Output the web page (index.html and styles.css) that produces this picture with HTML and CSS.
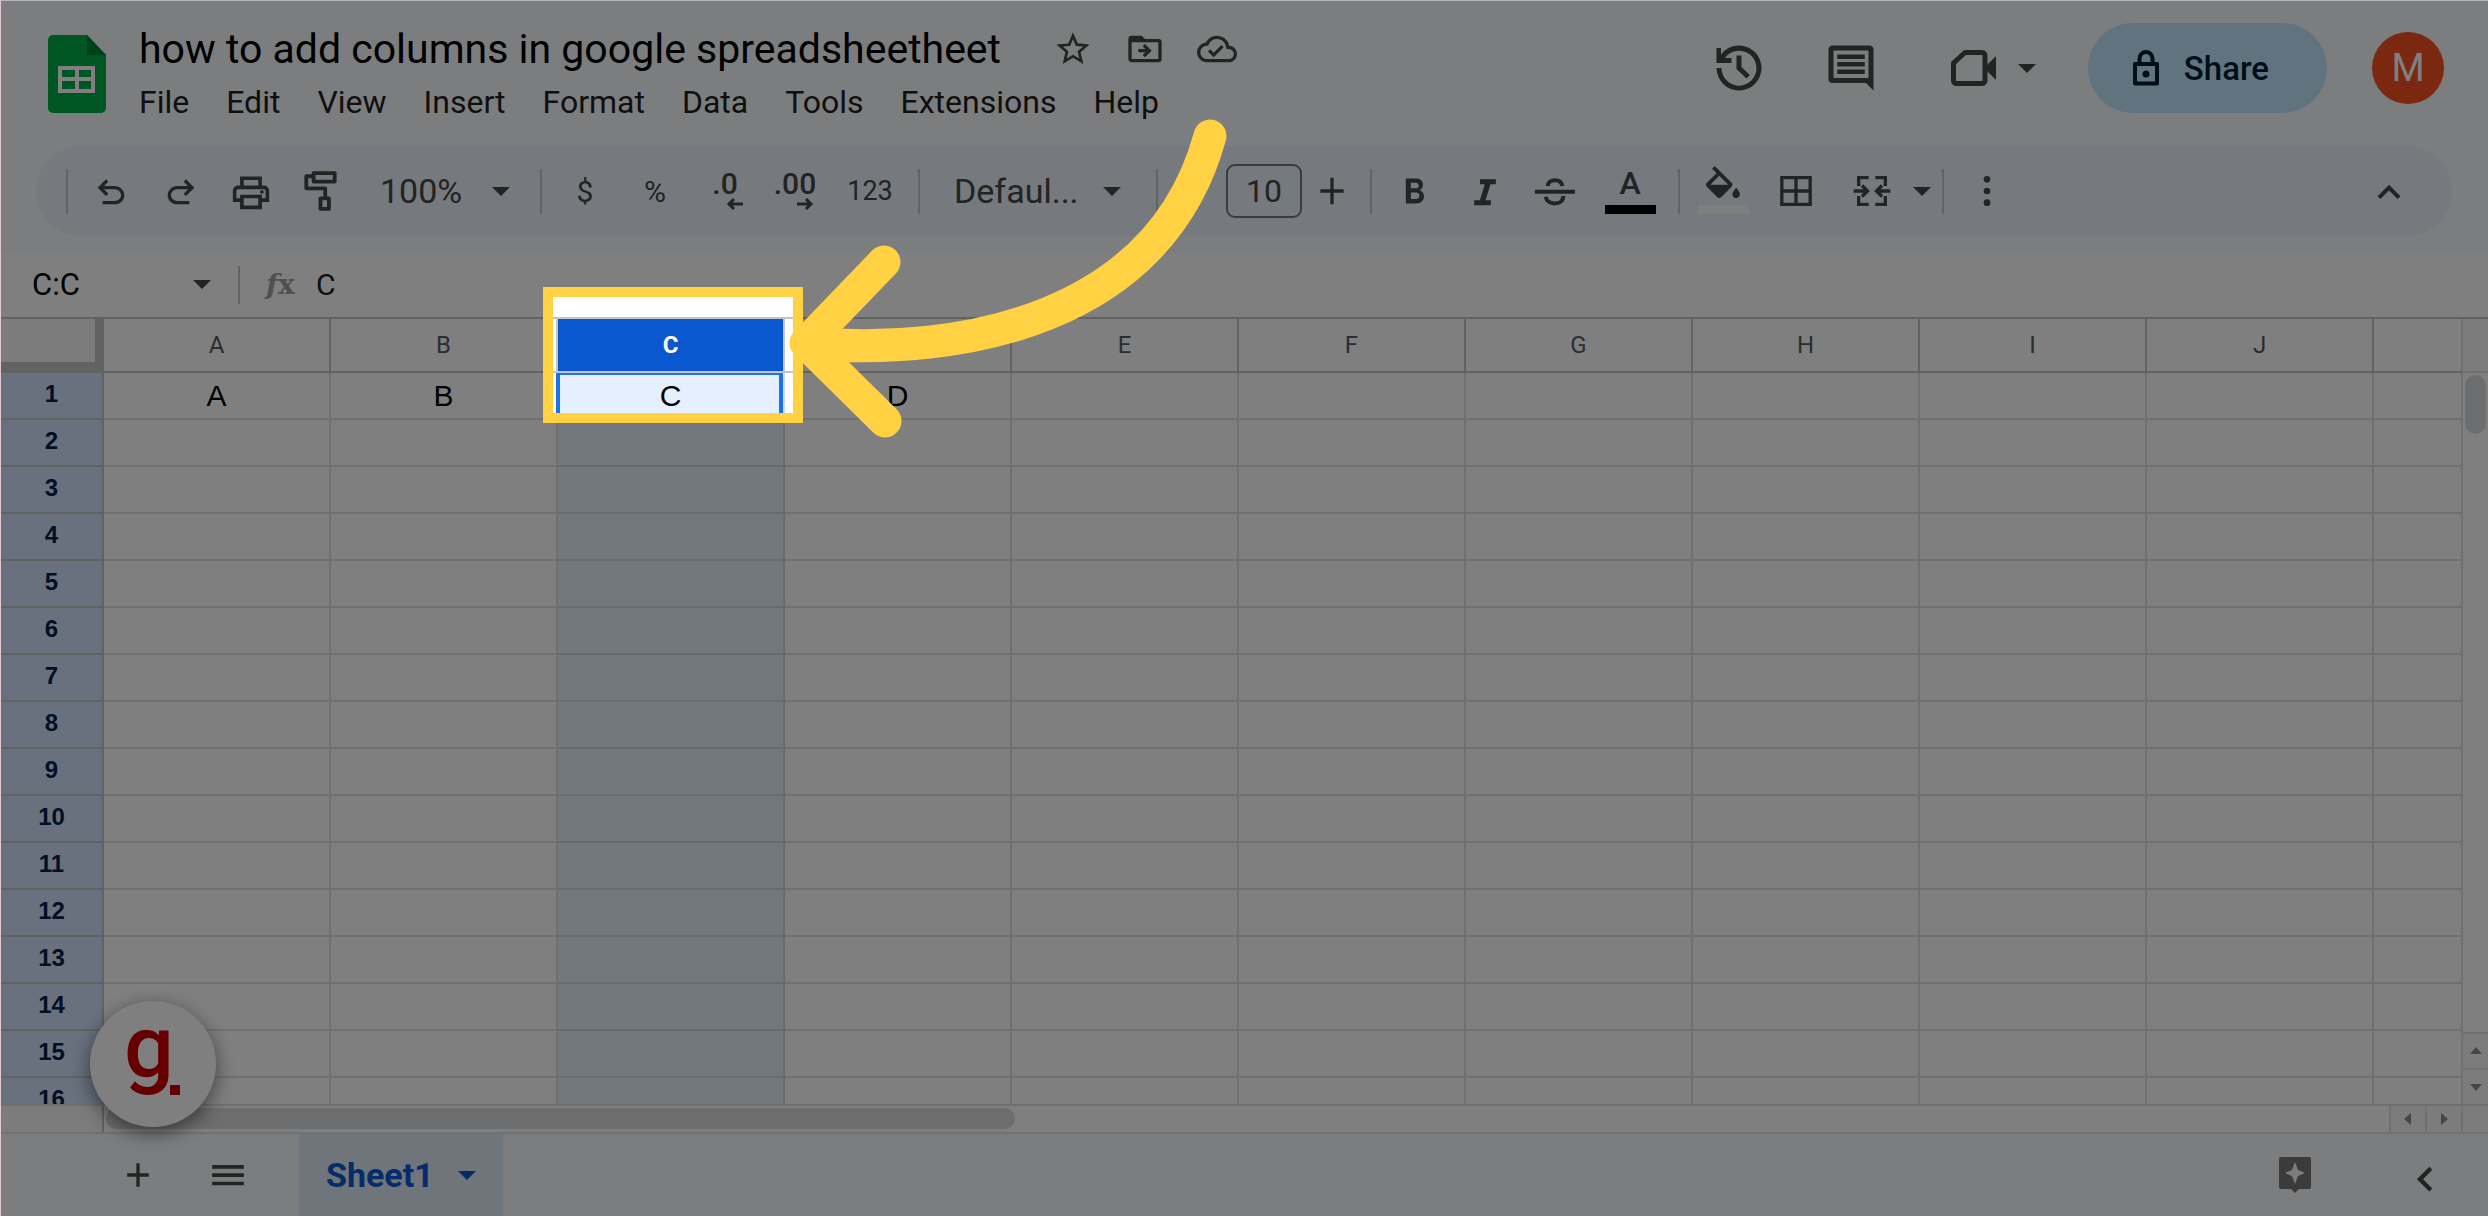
FILE: index.html
```html
<!DOCTYPE html>
<html lang="en">
<head>
<meta charset="utf-8">
<meta name="viewport" content="width=device-width, initial-scale=1">
<title>how to add columns in google spreadsheetheet</title>
<link rel="stylesheet" href="styles.css">
</head>
<body>

<div class="app">

<header class="header">
  <svg class="logo" viewBox="0 0 58 78">
    <path fill="#00ac47" d="M5 0h34l19 20v53a5 5 0 0 1-5 5H5a5 5 0 0 1-5-5V5a5 5 0 0 1 5-5z"/>
    <path fill="#00832d" d="M39 0l19 20H39z"/>
    <path fill="#fff" fill-rule="evenodd" d="M10 31h37v27H10zM14 35v7h13v-7zM31 35v7h12v-7zM14 46v8h13v-8zM31 46v8h12v-8z"/>
  </svg>
  <div class="doc">
    <div class="title-row">
      <h1 class="title">how to add columns in google spreadsheetheet</h1>
      <button class="icon-btn" aria-label="Star"><svg viewBox="0 0 24 24"><path d="M22 9.24l-7.19-.62L12 2 9.19 8.63 2 9.24l5.46 4.73L5.82 21 12 17.27 18.18 21l-1.63-7.03L22 9.24zM12 15.4l-3.76 2.27 1-4.28-3.32-2.88 4.38-.38L12 6.1l1.71 4.04 4.38.38-3.32 2.88 1 4.28L12 15.4z"/></svg></button>
      <button class="icon-btn" aria-label="Move"><svg viewBox="0 0 24 24"><path d="M20 6h-8l-2-2H4a2 2 0 0 0-2 2v12c0 1.1.9 2 2 2h16a2 2 0 0 0 2-2V8a2 2 0 0 0-2-2zm0 12H4V8h16v10zm-8-1l4-4-4-4-1.4 1.4 1.6 1.6H8v2h4.200l-1.600 1.600z"/></svg></button>
      <button class="icon-btn" aria-label="Document status"><svg viewBox="0 0 24 24"><path d="M19.350 10.040A7.490 7.490 0 0 0 12 4C9.110 4 6.600 5.640 5.350 8.040A5.994 5.994 0 0 0 0 14c0 3.310 2.690 6 6 6h13c2.760 0 5-2.240 5-5 0-2.640-2.050-4.780-4.650-4.960zM19 18H6a4 4 0 0 1-.400-7.980l1.070-.110.500-.950A5.469 5.469 0 0 1 12 6c2.620 0 4.880 1.860 5.390 4.430l.300 1.500 1.530.110A2.980 2.980 0 0 1 19 18zm-9-3.820l-2.090-2.090L6.500 13.500 10 17l6.010-6.010-1.410-1.410z"/></svg></button>
    </div>
    <nav class="menu">
      <button>File</button>
      <button>Edit</button>
      <button>View</button>
      <button>Insert</button>
      <button>Format</button>
      <button>Data</button>
      <button>Tools</button>
      <button>Extensions</button>
      <button>Help</button>
    </nav>
  </div>
  <div class="actions">
    <button class="icon-btn big" aria-label="Version history"><svg viewBox="0 0 24 24"><path d="M12 3a9 9 0 0 0-7.200 3.600V4H3v6h6V8H6.300A7 7 0 1 1 5 12H3a9 9 0 1 0 9-9zm-1 4v5.400l4 3.800 1.300-1.400L13 11.600V7z"/></svg></button>
    <button class="icon-btn big" aria-label="Comments"><svg viewBox="0 0 24 24"><path d="M21 4.500C21 3.700 20.300 3 19.500 3h-15C3.700 3 3 3.700 3 4.500v12c0 .8.700 1.500 1.500 1.500H18l3 3zM19 16H5V5h14zM6.500 6.600h11v1.800h-11zm0 3h11v1.800h-11zm0 3h11v1.800h-11z"/></svg></button>
    <button class="meet" aria-label="Meet">
      <svg viewBox="0 0 45 36"><path d="M14 2.500h17a3 3 0 0 1 3 3v25a3 3 0 0 1-3 3H5.500a3 3 0 0 1-3-3V13z" fill="none" stroke="currentColor" stroke-width="5" stroke-linejoin="round"/><path d="M35 16l10-10v24L35 20z"/></svg>
      <span class="caret"></span>
    </button>
    <button class="share">
      <svg viewBox="0 0 28 36"><path d="M3 14h22v19.500H3zM7.500 14V8.500a6.500 6.500 0 0 1 13 0V14" fill="none" stroke="currentColor" stroke-width="4" stroke-linejoin="round"/><circle cx="14" cy="24" r="3.500"/></svg>
      Share
    </button>
    <button class="avatar" aria-label="Account">M</button>
  </div>
</header>

<div class="toolbar">
  <span class="sep"></span>
  <button class="tool" aria-label="Undo"><svg viewBox="0 0 24 24"><path d="M7 20v-2h7.100c1.050 0 1.960-.330 2.740-1S18 15.500 18 14.500s-.390-1.830-1.160-2.500-1.690-1-2.740-1H7.800l2.600 2.600L9 15l-5-5 5-5 1.400 1.400L7.800 9h6.300c1.620 0 3 .530 4.160 1.580C19.420 11.630 20 12.930 20 14.500s-.580 2.880-1.740 3.930C17.100 19.480 15.720 20 14.100 20z"/></svg></button>
  <button class="tool" aria-label="Redo"><svg viewBox="0 0 24 24"><path d="M17 20v-2H9.900c-1.050 0-1.960-.330-2.740-1S6 15.500 6 14.500s.390-1.830 1.160-2.500 1.690-1 2.740-1h6.300l-2.600 2.600L15 15l5-5-5-5-1.400 1.400L16.200 9H9.900c-1.620 0-3 .530-4.160 1.580C4.580 11.630 4 12.930 4 14.500s.580 2.880 1.740 3.930C6.900 19.480 8.280 20 9.900 20z"/></svg></button>
  <button class="tool" aria-label="Print"><svg viewBox="1 0 22 22"><path d="M19 8h-1V3H6v5H5c-1.660 0-3 1.340-3 3v6h4v4h12v-4h4v-6c0-1.660-1.340-3-3-3zM8 5h8v3H8zm8 12v2H8v-4h8zm2-2v-2H6v2H4v-4c0-.550.450-1 1-1h14c.550 0 1 .450 1 1v4z"/><circle cx="18" cy="11.500" r="1"/></svg></button>
  <button class="tool" aria-label="Paint format"><svg viewBox="0 0 32 38"><path d="M9 2h20v8H9zM8 5H2v11.500h18V25M15.500 26h8v10h-8z" fill="none" stroke="currentColor" stroke-width="3.600" stroke-linejoin="round"/></svg></button>
  <button class="zoom">100%<span class="caret"></span></button>
  <span class="sep"></span>
  <button class="tool sign">$</button>
  <button class="tool sign">%</button>
  <button class="tool decimals" aria-label="Decrease decimal places"><b>.0</b><svg viewBox="0 0 18 14"><path d="M17 7H3M8 2L3 7l5 5" fill="none" stroke="currentColor" stroke-width="3"/></svg></button>
  <button class="tool decimals" aria-label="Increase decimal places"><b>.00</b><svg viewBox="0 0 18 14"><path d="M1 7h14M10 2l5 5-5 5" fill="none" stroke="currentColor" stroke-width="3"/></svg></button>
  <button class="tool wide more-formats">123</button>
  <span class="sep"></span>
  <button class="font">Defaul...<span class="caret"></span></button>
  <span class="sep"></span>
  <button class="tool step" aria-label="Decrease font size"><svg viewBox="0 0 24 24"><path d="M6 11h12v2H6z"/></svg></button>
  <input class="size" type="text" value="10" aria-label="Font size">
  <button class="tool step" aria-label="Increase font size"><svg viewBox="0 0 24 24"><path d="M19 13h-6v7h-2v-7H5v-2h6V4h2v7h6z"/></svg></button>
  <span class="sep"></span>
  <button class="tool" aria-label="Bold"><svg viewBox="0 0 24 24"><path d="M6.500 4.500h6.300c2.300 0 4 1.500 4 3.700 0 1.500-.8 2.700-2 3.300 1.600.5 2.600 1.900 2.600 3.700 0 2.500-1.900 4.300-4.500 4.300H6.500zm3 2.600v3.300h3c1 0 1.700-.7 1.700-1.600s-.7-1.700-1.700-1.700zm0 5.800v3.900h3.200c1.200 0 2-.8 2-1.900s-.8-2-2-2z"/></svg></button>
  <button class="tool" aria-label="Italic"><svg viewBox="0 0 24 24"><path d="M9 5v3h2.900l-3 9.500H5.500v3h10v-3h-3.200l3-9.500h3.200V5z"/></svg></button>
  <button class="tool" aria-label="Strikethrough"><svg viewBox="0 0 24 24"><path d="M7.500 9c.3-2.300 2.200-3.500 4.500-3.500 2.200 0 4 1.100 4.500 3.500M6.500 15.500c.3 2.500 2.500 4 5.300 4 3.200 0 5.200-1.700 5.200-4.500" fill="none" stroke="currentColor" stroke-width="2.400"/><path d="M0 11.200h24v2.400H0z"/></svg></button>
  <button class="tool wide swatch" aria-label="Text color"><span class="letter">A</span><span class="bar black"></span></button>
  <span class="sep"></span>
  <button class="tool swatch" aria-label="Fill color"><svg viewBox="3 0 18 17"><path d="M16.560 8.940L7.620 0 6.210 1.410l2.380 2.380-5.150 5.150a1.490 1.490 0 0 0 0 2.120l5.500 5.500c.290.290.680.440 1.060.440s.770-.150 1.060-.440l5.500-5.500c.590-.580.590-1.530 0-2.120zM5.210 10L10 5.210 14.790 10zM19 11.500s-2 2.170-2 3.500c0 1.100.9 2 2 2s2-.9 2-2c0-1.330-2-3.500-2-3.500z"/></svg><span class="bar white"></span></button>
  <button class="tool mid" aria-label="Borders"><svg viewBox="0 0 24 24"><path d="M2.500 3v18h19V3zm8.500 16H4.500v-6H11zm0-8H4.500V5H11zm8.500 8H13v-6h6.500zm0-8H13V5h6.500z"/></svg></button>
  <button class="tool mid" aria-label="Merge cells"><svg viewBox="0 0 24 24"><path d="M10 4H4v5M10 20H4v-5M14 4h6v5M14 20h6v-5M1 12h8M23 12h-8M6 8.700L9.300 12 6 15.300M18 8.700L14.700 12l3.300 3.300" fill="none" stroke="currentColor" stroke-width="2"/></svg></button>
  <button class="drop" aria-label="Select merge type"><span class="caret"></span></button>
  <span class="sep"></span>
  <button class="tool" aria-label="More"><svg viewBox="0 0 24 24"><circle cx="12" cy="5" r="2"/><circle cx="12" cy="12" r="2"/><circle cx="12" cy="19" r="2"/></svg></button>
  <button class="tool last" aria-label="Hide the menus"><svg viewBox="0 0 24 24"><path d="M6 16l6-6 6 6" fill="none" stroke="currentColor" stroke-width="2.400"/></svg></button>
</div>

<div class="formula-bar">
  <button class="name-box">C:C<span class="caret"></span></button>
  <span class="line"></span>
  <span class="fx"><i>f</i>x</span>
  <input class="formula" type="text" value="C" aria-label="Formula">
</div>

<main class="main">
  <div class="grid">
    <div class="cells">
      <table class="sheet">
        <thead>
          <tr><th class="corner"></th><th>A</th><th>B</th><th class="picked">C</th><th>D</th><th>E</th><th>F</th><th>G</th><th>H</th><th>I</th><th>J</th><th class="rest"></th></tr>
        </thead>
        <tbody id="rows"></tbody>
      </table>
    </div>
    <div class="spotlight"></div>
    <svg class="arrow" viewBox="0 0 440 330">
      <path d="M430 17C380 201 180 238 26 224M104 143L26 224l79 78"/>
    </svg>
  </div>
  <div class="v-scroll">
    <span class="v-head"></span>
    <span class="v-thumb"></span>
    <button aria-label="Scroll up"><svg viewBox="0 0 12 12"><path d="M0 9l6-7 6 7z"/></svg></button>
    <button aria-label="Scroll down"><svg viewBox="0 0 12 12"><path d="M0 3l6 7 6-7z"/></svg></button>
  </div>
</main>

<div class="h-scroll">
  <span class="h-head"></span>
  <span class="h-track"><span class="h-thumb"></span></span>
  <button aria-label="Scroll left"><svg viewBox="0 0 12 12"><path d="M9 0L2 6l7 6z"/></svg></button>
  <button aria-label="Scroll right"><svg viewBox="0 0 12 12"><path d="M3 0l7 6-7 6z"/></svg></button>
  <span class="h-end"></span>
</div>

<footer class="tabs">
  <button class="tab-btn" aria-label="Add sheet"><svg viewBox="0 0 24 24"><path d="M18.500 13H13v6h-2v-6H5.500v-2H11V5h2v6h5.500z"/></svg></button>
  <button class="tab-btn" aria-label="All sheets"><svg viewBox="0 0 24 24"><path d="M2.500 6h19v2.200h-19zm0 5h19v2.200h-19zm0 5h19v2.200h-19z"/></svg></button>
  <button class="tab">Sheet1<span class="caret"></span></button>
  <button class="tab-btn explore" aria-label="Explore"><svg viewBox="0 0 32 36"><path fill-rule="evenodd" d="M2 0h28a2 2 0 0 1 2 2v28a2 2 0 0 1-2 2H20l-4 4-4-4H2a2 2 0 0 1-2-2V2a2 2 0 0 1 2-2zm14 5l-3 8-7 3 7 3 3 8 3-8 7-3-7-3z"/></svg></button>
  <button class="tab-btn side" aria-label="Show side panel"><svg viewBox="0 0 24 24"><path d="M15.500 8L9 14.500l6.500 6.500" fill="none" stroke="currentColor" stroke-width="2.600"/></svg></button>
</footer>

<button class="guide" aria-label="g.">
  <svg viewBox="0 0 126 126"><text x="34" y="76">g</text><rect x="80" y="84" width="10" height="10"/></svg>
</button>

</div>

<script>
var rows = document.getElementById("rows");
var firstRow = ["A", "B", "C", "D"];

for (var r = 1; r <= 16; r++) {
  var tr = document.createElement("tr");
  var th = document.createElement("th");
  th.textContent = r;
  tr.appendChild(th);
  for (var c = 0; c < 11; c++) {
    var td = document.createElement("td");
    if (r === 1 && firstRow[c]) {
      td.textContent = firstRow[c];
    }
    if (c === 2) {
      td.className = r === 1 ? "picked first" : "picked";
    }
    tr.appendChild(td);
  }
  rows.appendChild(tr);
}
</script>

</body>
</html>
```

FILE: styles.css
```css
* {
  box-sizing: border-box;
}

body {
  margin: 0;
  font-family: Roboto, "Liberation Sans", sans-serif;
  color: #444746;
}

button {
  padding: 0;
  border: none;
  background: none;
  font: inherit;
  color: inherit;
  cursor: pointer;
}

svg {
  display: block;
  fill: currentColor;
}

.app {
  position: relative;
  display: flex;
  flex-direction: column;
  height: 100vh;
  overflow: hidden;
  background: #f9fbfd;
  border-top: 1px solid #b8b8bc;
  border-left: 1px solid #e6c8d0;
}

/* Small triangle used by every drop-down */
.caret {
  border: 9px solid transparent;
  border-top-color: currentColor;
  border-bottom: none;
}

/* Title, menus and the buttons on the right */
.header {
  display: flex;
  align-items: flex-start;
  height: 145px;
  padding: 0 44px 0 47px;
}

.logo {
  width: 58px;
  height: 78px;
  margin-top: 34px;
}

.doc {
  padding: 18px 0 0 33px;
}

.title-row {
  display: flex;
  align-items: center;
  gap: 32px;
  height: 60px;
}

.title {
  margin: 0 20px 0 0;
  font-size: 41px;
  line-height: 60px;
  font-weight: 400;
  color: #000;
  white-space: nowrap;
}

.icon-btn svg {
  width: 40px;
  height: 40px;
}

.menu {
  display: flex;
  gap: 37px;
  color: #1f1f1f;
  font-size: 32px;
  line-height: 46px;
}

.actions {
  display: flex;
  align-items: center;
  height: 90px;
  margin: 22px 0 0 auto;
}

.icon-btn.big {
  margin-right: 52px;
}

.icon-btn.big svg {
  width: 60px;
  height: 60px;
}

.meet {
  display: flex;
  align-items: center;
  gap: 22px;
  margin: 0 52px 0 18px;
}

.meet svg {
  width: 45px;
  height: 36px;
}

.share {
  display: flex;
  align-items: center;
  gap: 24px;
  height: 90px;
  margin-right: 45px;
  padding: 0 58px 0 44px;
  border-radius: 45px;
  background: #c2e7ff;
  color: #001d35;
  font-size: 33px;
  font-weight: 500;
}

.share svg {
  width: 28px;
  height: 36px;
}

.avatar {
  width: 72px;
  height: 72px;
  border-radius: 50%;
  background: #f4511e;
  color: #fff;
  font-size: 38px;
}

/* Toolbar */
.toolbar {
  display: flex;
  align-items: center;
  height: 90px;
  margin: 0 36px 18px 35px;
  padding: 0 28px 0 22px;
  border-radius: 45px;
  background: #edf2fa;
}

.sep {
  width: 2px;
  height: 45px;
  margin: 0 8px;
  background: #c7c7c7;
}

.tool {
  display: flex;
  align-items: center;
  justify-content: center;
  width: 70px;
  height: 64px;
}

.tool svg {
  width: 40px;
  height: 40px;
}

.tool.wide {
  width: 80px;
}

.tool.mid {
  width: 76px;
}

.tool.step {
  width: 60px;
}

.tool.last {
  margin-left: auto;
}

.sign {
  font-size: 30px;
}

.more-formats {
  font-size: 27px;
}

.zoom,
.font {
  display: flex;
  align-items: center;
  justify-content: space-between;
  width: 176px;
  padding: 0 22px 0 24px;
  font-size: 34px;
}

.font {
  width: 220px;
  padding: 0 27px 0 26px;
}

.decimals {
  flex-direction: column;
  font-size: 30px;
  line-height: 26px;
}

.decimals b {
  font-weight: 500;
}

.tool.decimals svg {
  width: 18px;
  height: 14px;
  margin-left: 20px;
}

.size {
  width: 76px;
  height: 54px;
  padding: 0;
  border: 2px solid #747775;
  border-radius: 9px;
  background: transparent;
  color: #444746;
  font-family: inherit;
  font-size: 32px;
  text-align: center;
}

.swatch {
  flex-direction: column;
  justify-content: flex-end;
  gap: 7px;
  padding-bottom: 9px;
}

.tool.swatch svg {
  height: 32px;
}

.letter {
  font-size: 32px;
  font-weight: 500;
  line-height: 30px;
}

.bar {
  width: 51px;
  height: 9px;
}

.black {
  background: #000;
}

.white {
  background: #fff;
}

.drop {
  display: flex;
  justify-content: center;
  width: 24px;
}

/* Name box and formula */
.formula-bar {
  display: flex;
  align-items: center;
  height: 63px;
  padding-bottom: 2px;
  background: #fff;
}

.name-box {
  display: flex;
  align-items: center;
  justify-content: space-between;
  width: 237px;
  padding: 0 27px 0 31px;
  color: #000;
  font-size: 31px;
}

.name-box .caret {
  border-top-color: #444746;
}

.line {
  width: 2px;
  height: 38px;
  background: #c7c7c7;
}

.fx {
  width: 76px;
  padding-left: 26px;
  color: #a0a0a0;
  font-family: "DejaVu Serif", serif;
  font-size: 28px;
  font-weight: 700;
}

.formula {
  flex: 1;
  padding: 0;
  border: none;
  background: none;
  color: #1f1f1f;
  font-family: inherit;
  font-size: 30px;
}

/* Grid */
.main {
  display: flex;
  flex: 1;
  min-height: 0;
  border-top: 2px solid #c4c4c4;
  border-bottom: 2px solid #e1e1e1;
  background: #fff;
}

.grid {
  position: relative;
  flex: 1;
  min-width: 0;
}

.cells {
  height: 100%;
  overflow: hidden;
}

.sheet {
  width: 100%;
  border-collapse: separate;
  border-spacing: 0;
  table-layout: fixed;
}

.sheet th,
.sheet td {
  height: 47px;
  padding: 0;
  border-right: 2px solid #e1e1e1;
  border-bottom: 2px solid #e1e1e1;
  text-align: center;
}

.sheet td {
  color: #000;
  font-family: "Liberation Sans", sans-serif;
  font-size: 30px;
}

.sheet thead th {
  width: 227px;
  height: 54px;
  border-color: #c4c4c4;
  color: #575b5f;
  font-size: 24px;
  font-weight: 400;
}

.sheet thead .corner {
  width: 103px;
  border-right: 9px solid #c4c4c4;
  border-bottom: 11px solid #c4c4c4;
  background: #f8f9fa;
}

.sheet thead .rest {
  width: auto;
  border-right-color: #e1e1e1;
}

.sheet thead .picked {
  background: #0b57d0;
  color: #fff;
  font-weight: 700;
}

.sheet tbody th {
  padding-bottom: 3px;
  border-color: #c4c4c4;
  background: #d3e3fd;
  color: #041e49;
  font-family: "Liberation Sans", sans-serif;
  font-size: 24px;
}

.sheet td.picked {
  border-color: #d0d8e4;
  background: #e6effd;
}

.sheet td.first {
  box-shadow: -2px 0 #1a73e8, inset 2px 0 #1a73e8, inset -4px 0 #1a73e8, inset 0 2px #1a73e8;
}

/* Everything outside this frame is dimmed */
.spotlight {
  position: absolute;
  z-index: 2;
  top: -32px;
  left: 542px;
  width: 260px;
  height: 136px;
  border: 10px solid #ffd143;
  box-shadow: 0 0 0 3000px rgba(0, 0, 0, 0.5);
}

.arrow {
  position: absolute;
  z-index: 3;
  top: -200px;
  left: 779px;
  width: 440px;
  height: 330px;
  overflow: visible;
  fill: none;
  stroke: #ffd143;
  stroke-width: 33px;
  stroke-linecap: round;
  stroke-linejoin: round;
}

/* Scroll bars */
.v-scroll {
  display: flex;
  flex-direction: column;
  width: 25px;
  color: #8c8c8c;
}

.v-head {
  height: 54px;
  border-bottom: 2px solid #e1e1e1;
  background: #f8f8f8;
}

.v-thumb {
  width: 21px;
  height: 59px;
  margin: 2px 2px auto;
  border-radius: 11px;
  background: #dadce0;
}

.v-scroll button {
  display: flex;
  align-items: center;
  justify-content: center;
  height: 36px;
  border-top: 2px solid #e1e1e1;
  background: #f8f8f8;
}

.v-scroll svg,
.h-scroll svg {
  width: 12px;
  height: 12px;
}

.h-scroll {
  display: flex;
  height: 26px;
  background: #fff;
  color: #8c8c8c;
}

.h-head {
  width: 103px;
  border-right: 2px solid #c4c4c4;
  background: #f8f8f8;
}

.h-track {
  flex: 1;
  padding: 2px;
}

.h-thumb {
  display: block;
  width: 909px;
  height: 21px;
  border-radius: 11px;
  background: #dadce0;
}

.h-scroll button {
  display: flex;
  align-items: center;
  justify-content: center;
  width: 36px;
  border-left: 2px solid #e1e1e1;
  background: #f8f8f8;
}

.h-end {
  width: 27px;
  border-left: 2px solid #e1e1e1;
  background: #f8f8f8;
}

/* Sheet tabs */
.tabs {
  display: flex;
  align-items: center;
  height: 84px;
  padding: 0 43px 0 92px;
  border-top: 2px solid #e1e3e1;
}

.tab-btn {
  display: flex;
  align-items: center;
  justify-content: center;
  width: 90px;
  height: 82px;
}

.tab-btn svg {
  width: 40px;
  height: 40px;
}

.tab {
  display: flex;
  align-items: center;
  gap: 24px;
  height: 82px;
  margin-left: 26px;
  padding: 0 27px;
  background: #e1e9f7;
  color: #0b57d0;
  font-size: 34px;
  font-weight: 700;
}

.explore {
  width: 40px;
  margin-left: auto;
  color: #747775;
}

.explore svg {
  width: 32px;
  height: 36px;
}

.side {
  width: 40px;
  margin-left: 90px;
}

/* Floating button in the corner */
.guide {
  position: absolute;
  z-index: 1;
  left: 89px;
  bottom: 89px;
  width: 126px;
  height: 126px;
  border-radius: 50%;
  background: #fff;
  box-shadow: 0 6px 20px rgba(0, 0, 0, 0.5);
  color: #cc0000;
}

.guide svg {
  overflow: visible;
}

.guide text {
  font-size: 88px;
  font-weight: 500;
}
```
